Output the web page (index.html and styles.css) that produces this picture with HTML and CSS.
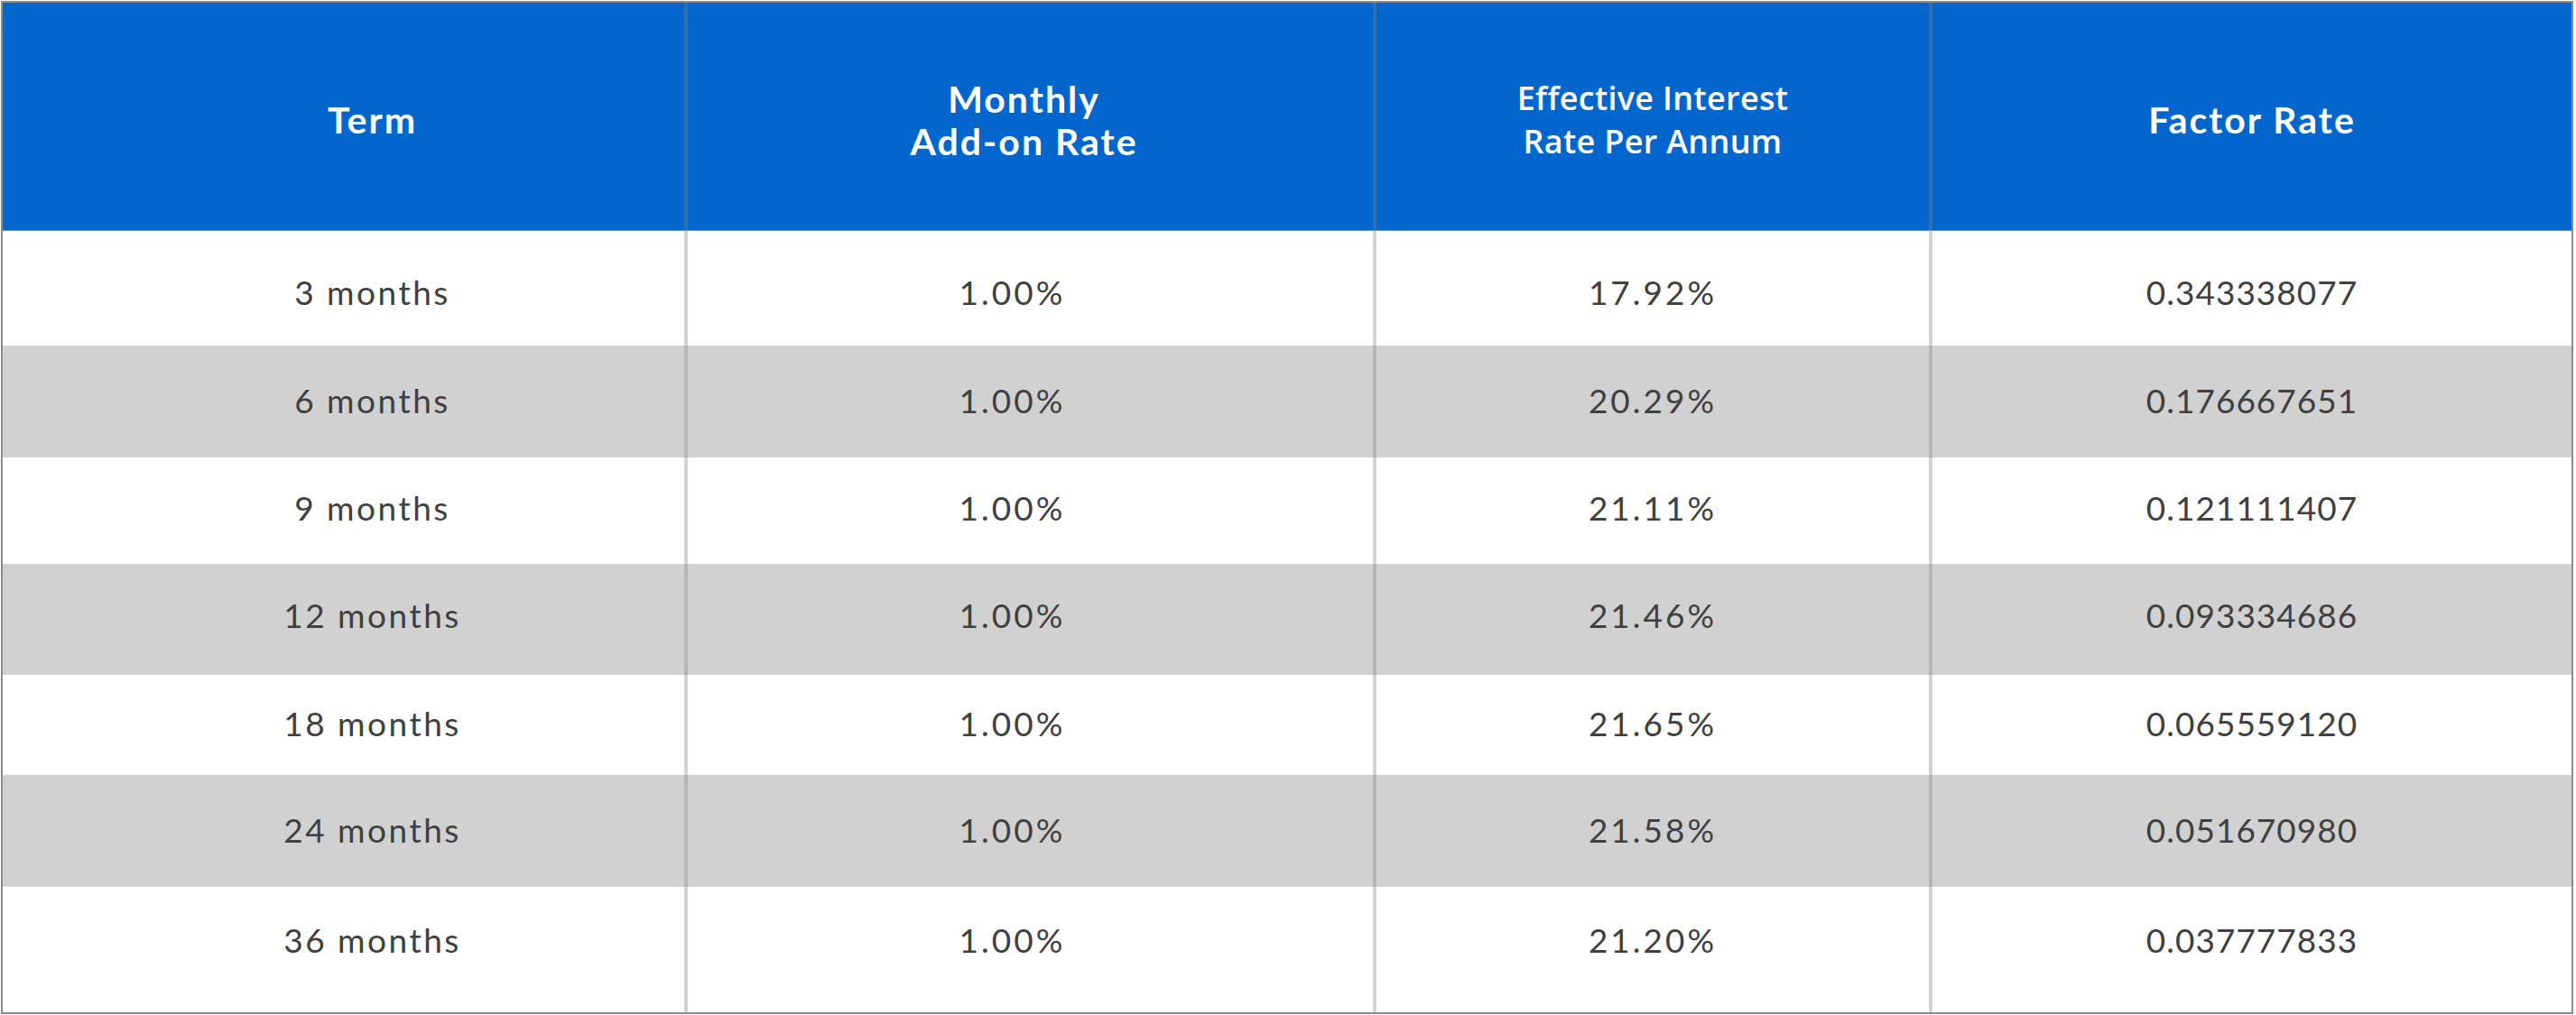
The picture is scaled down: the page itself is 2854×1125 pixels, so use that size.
FILE: index.html
```html
<!DOCTYPE html>
<html lang="en">
<head>
<meta charset="utf-8">
<title>Rates</title>
<link rel="stylesheet" href="styles.css">
</head>
<body>
<div class="table">
  <div class="row head">
    <div class="cell c1"><span class="h-lato">Term</span></div>
    <div class="cell c2"><span class="h-lato">Monthly<br>Add-on Rate</span></div>
    <div class="cell c3"><span class="h-open">Effective Interest<br>Rate Per Annum</span></div>
    <div class="cell c4"><span class="h-lato">Factor Rate</span></div>
  </div>
  <div class="row r1">
    <div class="cell c1">3 months</div><div class="cell c2">1.00%</div><div class="cell c3">17.92%</div><div class="cell c4">0.343338077</div>
  </div>
  <div class="row r2 alt">
    <div class="cell c1">6 months</div><div class="cell c2">1.00%</div><div class="cell c3">20.29%</div><div class="cell c4">0.176667651</div>
  </div>
  <div class="row r3">
    <div class="cell c1">9 months</div><div class="cell c2">1.00%</div><div class="cell c3">21.11%</div><div class="cell c4">0.121111407</div>
  </div>
  <div class="row r4 alt">
    <div class="cell c1">12 months</div><div class="cell c2">1.00%</div><div class="cell c3">21.46%</div><div class="cell c4">0.093334686</div>
  </div>
  <div class="row r5">
    <div class="cell c1">18 months</div><div class="cell c2">1.00%</div><div class="cell c3">21.65%</div><div class="cell c4">0.065559120</div>
  </div>
  <div class="row r6 alt">
    <div class="cell c1">24 months</div><div class="cell c2">1.00%</div><div class="cell c3">21.58%</div><div class="cell c4">0.051670980</div>
  </div>
  <div class="row r7">
    <div class="cell c1">36 months</div><div class="cell c2">1.00%</div><div class="cell c3">21.20%</div><div class="cell c4">0.037777833</div>
  </div>
</div>
</body>
</html>
```
FILE: styles.css
```css
html, body {
  margin: 0;
  padding: 0;
  background: #ffffff;
}
body {
  padding: 1px;
  font-family: "Lato", "Liberation Sans", sans-serif;
}
.table {
  width: 2850px;
  box-sizing: border-box;
  border: 2px solid #8c8c8c;
  display: flex;
  flex-direction: column;
}
.row {
  display: grid;
  grid-template-columns: 759px 763px 616px 708px;
  background: #ffffff;
  box-sizing: border-box;
}
.row.alt {
  background: #d1d1d1;
}
.cell {
  display: flex;
  align-items: center;
  justify-content: center;
  text-align: center;
  color: #404040;
  font-size: 37px;
  letter-spacing: 1px;
  box-sizing: border-box;
  border-right: 4px solid rgba(128, 128, 128, 0.35);
}
.cell.c4 {
  border-right: none;
}
.cell.c1 {
  padding-left: 64px;
  letter-spacing: 2.5px;
}
.cell.c2 {
  padding-right: 40px;
  letter-spacing: 3px;
}
.cell.c3 {
  letter-spacing: 3px;
}
.head {
  height: 253px;
  background: #0266cc;
  border-bottom: 1px solid #7f8fa6;
}
.head .cell {
  color: #ffffff;
  padding-top: 7px;
  letter-spacing: 0;
}
.head .cell.c2 {
  padding-right: 14px;
}
.h-lato {
  font-family: "Lato", "Liberation Sans", sans-serif;
  font-weight: 700;
  font-size: 41px;
  letter-spacing: 2px;
  line-height: 47px;
}
.h-open {
  font-family: "Open Sans", "Liberation Sans", sans-serif;
  font-weight: 600;
  font-size: 36px;
  letter-spacing: 0.3px;
  line-height: 48px;
}
.r1 { height: 127px; }
.r2 { height: 124px; }
.r3 { height: 118px; }
.r4 { height: 123px; }
.r5 { height: 111px; }
.r6 { height: 124px; }
.r7 { height: 139px; }
.r1 .cell { padding-top: 8px; }
.r2 .cell { padding-bottom: 4px; }
.r3 .cell { padding-bottom: 8px; }
.r4 .cell { padding-bottom: 10px; }
.r5 .cell { padding-bottom: 4px; }
.r6 .cell { padding-bottom: 4px; }
.r7 .cell { padding-bottom: 22px; }
```
